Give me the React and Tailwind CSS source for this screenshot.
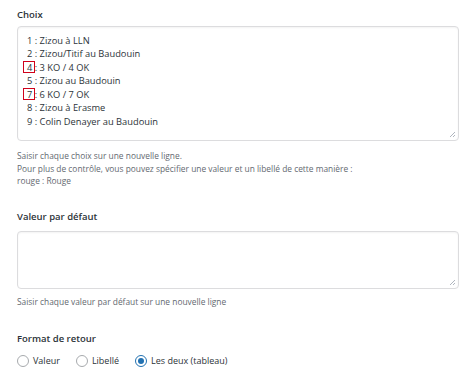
import React from "react";

const choices = [
  { n: "1", text: "Zizou à LLN" },
  { n: "2", text: "Zizou/Titif au Baudouin" },
  { n: "4", text: "3 KO / 4 OK", mark: true },
  { n: "5", text: "Zizou au Baudouin" },
  { n: "7", text: "6 KO / 7 OK", mark: true },
  { n: "8", text: "Zizou à Erasme" },
  { n: "9", text: "Colin Denayer au Baudouin" },
];

const Grip = () => (
  <svg
    className="absolute right-[2px] bottom-[2px]"
    width="8"
    height="8"
    viewBox="0 0 8 8"
  >
    <path d="M7 2 L2 7 M7 5 L5 7" stroke="#9ca3af" strokeWidth="0.8" />
  </svg>
);

const Radio = ({ label, checked }) => (
  <label className="flex items-center gap-[4px]">
    <span
      className={
        checked
          ? "w-[12px] h-[12px] rounded-full border border-[#2271b1] flex items-center justify-center"
          : "w-[12px] h-[12px] rounded-full border border-[#a7aaad] bg-white"
      }
    >
      {checked && <span className="w-[6px] h-[6px] rounded-full bg-[#2271b1]" />}
    </span>
    <span>{label}</span>
  </label>
);

export default function App() {
  return (
    <div
      className="w-[474px] h-[376px] bg-white overflow-hidden pl-[17px] pr-[15px] pt-[7px] text-[#3c434a]"
      style={{ fontFamily: '"Open Sans", "Noto Sans", sans-serif' }}
    >
      {/* Choix */}
      <div className="text-[9.5px] font-semibold leading-[16px] text-[#2c3338]">Choix</div>
      <div className="relative mt-[3px] h-[115px] border border-[#dcdcde] rounded-[4px] shadow-[inset_0_1px_2px_rgba(0,0,0,0.05)] pl-[9px] pt-[6.5px] text-[9.3px] leading-[13.5px] text-[#2c3338]">
        {choices.map((c) => (
          <div key={c.n} className="relative">
            {c.n} : {c.text}
            {c.mark && (
              <span className="absolute left-[-4px] top-[0px] w-[12px] h-[12px] border-[1.5px] border-[#d0021b]" />
            )}
          </div>
        ))}
        <Grip />
      </div>
      <div className="mt-[9px] text-[8.4px] leading-[12.5px] text-[#646970]">
        <p>Saisir chaque choix sur une nouvelle ligne.</p>
        <p>
          Pour plus de contrôle, vous pouvez spécifier une valeur et un libellé de cette manière :
        </p>
        <p>rouge : Rouge</p>
      </div>

      {/* Valeur par défaut */}
      <div className="mt-[21px] text-[9.5px] font-semibold leading-[16px] text-[#2c3338]">
        Valeur par défaut
      </div>
      <div className="relative mt-[6px] h-[58px] border border-[#dcdcde] rounded-[4px] shadow-[inset_0_1px_2px_rgba(0,0,0,0.05)]">
        <Grip />
      </div>
      <p className="mt-[7px] text-[8.4px] leading-[12.5px] text-[#646970]">
        Saisir chaque valeur par défaut sur une nouvelle ligne
      </p>

      {/* Format de retour */}
      <div className="mt-[23px] text-[9.5px] font-semibold leading-[16px] text-[#2c3338]">
        Format de retour
      </div>
      <div className="mt-[6px] flex items-center gap-[16px] text-[9px] leading-[16px] text-[#2c3338]">
        <Radio label="Valeur" />
        <Radio label="Libellé" />
        <Radio label="Les deux (tableau)" checked />
      </div>
    </div>
  );
}
